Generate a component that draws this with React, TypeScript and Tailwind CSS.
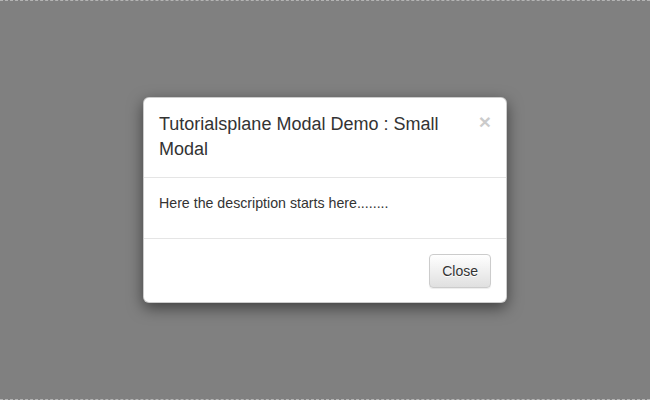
export default function App() {
  return (
    <div className="box-border flex h-[400px] w-full items-center justify-center border-y border-dashed border-[#b4b4b4] bg-[#808080] font-['Liberation_Sans',Arial,sans-serif] text-[14px] text-[#333333]">
      <div className="w-[364px] rounded-[6px] border border-black/20 bg-white shadow-[0_5px_15px_rgba(0,0,0,0.5)]">
        {/* header */}
        <div className="border-b border-[#e5e5e5] px-[15px] pt-[14px] pb-[15px]">
          <button className="float-right mt-[-1px] text-[21px] font-bold leading-none text-black opacity-20">
            ×
          </button>
          <h4 className="m-0 text-[18px] font-normal leading-[25px]">
            Tutorialsplane Modal Demo : Small Modal
          </h4>
        </div>
        {/* body */}
        <div className="p-[15px]">
          <p className="mb-[10px] text-[14.2px] leading-[20px]">Here the description starts here........</p>
        </div>
        {/* footer */}
        <div className="flex justify-end border-t border-[#e5e5e5] px-[15px] pt-[15px] pb-[14px]">
          <button className="rounded-[4px] border border-[#cccccc] bg-gradient-to-b from-white to-[#e0e0e0] px-[12px] py-[6px] leading-[20px] text-[#333333] shadow-[inset_0_1px_0_rgba(255,255,255,0.15),0_1px_1px_rgba(0,0,0,0.075)] [text-shadow:0_1px_0_#fff]">
            Close
          </button>
        </div>
      </div>
    </div>
  )
}
